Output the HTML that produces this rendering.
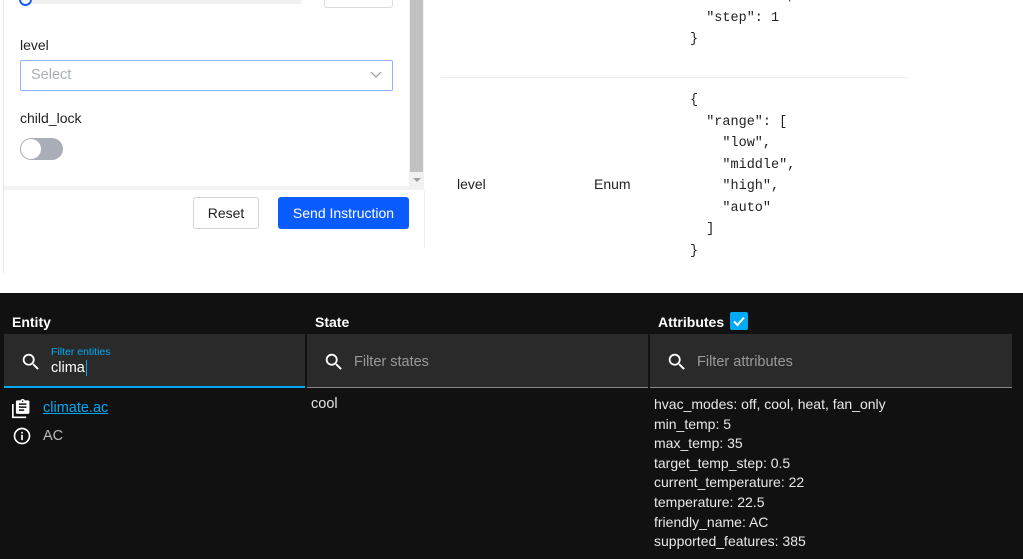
<!DOCTYPE html>
<html><head><meta charset="utf-8"><style>
*{margin:0;padding:0;box-sizing:border-box}
body{width:1023px;height:559px;overflow:hidden;background:#fff;font-family:"Liberation Sans",sans-serif;position:relative}
.a{position:absolute}
.mono{font-family:"Liberation Mono",monospace;font-size:13.5px;color:#222;white-space:pre;line-height:21.5px}
.lbl{font-size:14px;color:#222}
.dk{color:#e1e1e1}
.hd{font-weight:bold;font-size:14px;color:#fff}
.flt{background:#2a2a2a;height:54px;border-bottom:1px solid #888}
.ph{font-size:14.5px;color:#9a9a9a}
</style></head><body>
<div class="a" style="left:3px;top:0;width:1px;height:273px;background:#e6e6e6"></div>
<div class="a" style="left:26px;top:0;width:276px;height:4px;background:#f0f0f0;border-radius:2px"></div>
<div class="a" style="left:19px;top:-7px;width:13px;height:13px;border:2px solid #1a5cff;border-radius:50%;background:#fff"></div>
<div class="a" style="left:324px;top:-4px;width:69px;height:12px;border:1px solid #ddd;border-radius:3px"></div>
<div class="a lbl" style="left:20px;top:37px">level</div>
<div class="a" style="left:20px;top:60px;width:373px;height:31px;border:1px solid #8fb3ff;border-radius:2px"></div>
<div class="a" style="left:31px;top:67px;font-size:14.5px;color:#aab0ba">Select</div>
<svg class="a" style="left:370px;top:70px" width="12" height="10"><path d="M1 2 L6 7 L11 2" stroke="#999" fill="none" stroke-width="1.2"/></svg>
<div class="a lbl" style="left:20px;top:110px">child_lock</div>
<div class="a" style="left:20px;top:138px;width:43px;height:22px;border-radius:11px;background:#a9aeb8"></div>
<div class="a" style="left:21px;top:139px;width:20px;height:20px;border-radius:50%;background:#fff"></div>
<div class="a" style="left:409px;top:0;width:15px;height:188px;background:#f1f1f1"></div>
<div class="a" style="left:410px;top:0;width:13px;height:172px;background:#c1c1c1"></div>
<div class="a" style="left:413px;top:178px;width:0;height:0;border-left:4px solid transparent;border-right:4px solid transparent;border-top:4px solid #a0a0a0"></div>
<div class="a" style="left:4px;top:186px;width:420px;height:4px;background:#f2f2f2"></div>
<div class="a" style="left:424px;top:190px;width:1px;height:58px;background:#eee"></div>
<div class="a" style="left:193px;top:197px;width:66px;height:32px;border:1px solid #d4d4d4;border-radius:3px;font-size:14px;color:#222;text-align:center;line-height:30px">Reset</div>
<div class="a" style="left:278px;top:197px;width:131px;height:32px;background:#0a5cff;border-radius:3px;font-size:14px;color:#fff;text-align:center;line-height:32px">Send Instruction</div>
<div class="a mono" style="left:690px;top:-14px">  "scale": 0,
  "step": 1
}</div>
<div class="a" style="left:441px;top:77px;width:467px;height:1px;background:#eee"></div>
<div class="a mono" style="left:690px;top:90px">{
  "range": [
    "low",
    "middle",
    "high",
    "auto"
  ]
}</div>
<div class="a lbl" style="left:457px;top:176px">level</div>
<div class="a lbl" style="left:594px;top:176px">Enum</div>
<div class="a" style="left:0;top:293px;width:1023px;height:266px;background:#111"></div>
<div class="a hd" style="left:12px;top:314px">Entity</div>
<div class="a hd" style="left:315px;top:314px">State</div>
<div class="a hd" style="left:658px;top:314px">Attributes</div>
<div class="a" style="left:730px;top:312px;width:18px;height:18px;background:#03a9f4;border-radius:2px"></div>
<svg class="a" style="left:730px;top:312px" width="18" height="18"><path d="M4 9.5 L7.5 13 L14 5.5" stroke="#fff" stroke-width="2" fill="none"/></svg>
<div class="a flt" style="left:4px;top:334px;width:301px;border-bottom:2px solid #03a9f4"></div>
<div class="a flt" style="left:307px;top:334px;width:341px"></div>
<div class="a flt" style="left:650px;top:334px;width:362px"></div>
<svg class="a" style="left:20px;top:351px" width="22" height="22" viewBox="0 0 24 24"><path fill="#fff" d="M9.5 3A6.5 6.5 0 0116 9.5c0 1.610-.59 3.090-1.560 4.230l.27.27h.79l5 5-1.5 1.5-5-5v-.79l-.27-.27A6.520 6.520 0 019.5 16 6.5 6.5 0 013 9.5 6.5 6.5 0 019.5 3m0 2C7 5 5 7 5 9.5S7 14 9.5 14 14 12 14 9.5 12 5 9.5 5z"/></svg>
<svg class="a" style="left:323px;top:351px" width="22" height="22" viewBox="0 0 24 24"><path fill="#fff" d="M9.5 3A6.5 6.5 0 0116 9.5c0 1.610-.59 3.090-1.560 4.230l.27.27h.79l5 5-1.5 1.5-5-5v-.79l-.27-.27A6.520 6.520 0 019.5 16 6.5 6.5 0 013 9.5 6.5 6.5 0 019.5 3m0 2C7 5 5 7 5 9.5S7 14 9.5 14 14 12 14 9.5 12 5 9.5 5z"/></svg>
<svg class="a" style="left:666px;top:351px" width="22" height="22" viewBox="0 0 24 24"><path fill="#fff" d="M9.5 3A6.5 6.5 0 0116 9.5c0 1.610-.59 3.090-1.560 4.230l.27.27h.79l5 5-1.5 1.5-5-5v-.79l-.27-.27A6.520 6.520 0 019.5 16 6.5 6.5 0 013 9.5 6.5 6.5 0 019.5 3m0 2C7 5 5 7 5 9.5S7 14 9.5 14 14 12 14 9.5 12 5 9.5 5z"/></svg>
<div class="a" style="left:51px;top:346px;font-size:10.5px;color:#03a9f4">Filter entities</div>
<div class="a" style="left:51px;top:360px;font-size:14.5px;color:#fff">clima<span style="border-left:1.5px solid #03a9f4;margin-left:1px"></span></div>
<div class="a ph" style="left:354px;top:354px">Filter states</div>
<div class="a ph" style="left:697px;top:354px">Filter attributes</div>
<svg class="a" style="left:12px;top:399px" width="20" height="20" viewBox="0 0 24 24"><path fill="#fff" d="M17 9H7V7h10v2m0 4H7v-2h10v2m-3 4H7v-2h7v2M12 3a1 1 0 011 1 1 1 0 01-1 1 1 1 0 01-1-1 1 1 0 011-1m7 0h-4.18C14.4 1.84 13.3 1 12 1s-2.4.84-2.82 2H5a2 2 0 00-2 2v14a2 2 0 002 2h14a2 2 0 002-2V5a2 2 0 00-2-2z" transform="translate(2 -1) scale(.9)"/><path d="M1 6v16h16" stroke="#fff" stroke-width="2" fill="none"/></svg>
<svg class="a" style="left:12px;top:426px" width="20" height="20" viewBox="0 0 24 24"><circle cx="12" cy="12" r="9" stroke="#fff" stroke-width="2" fill="none"/><rect x="11" y="10.5" width="2" height="6.5" fill="#fff"/><rect x="11" y="7" width="2" height="2" fill="#fff"/></svg>
<div class="a" style="left:43px;top:400px;font-size:14.5px;color:#03a9f4;text-decoration:underline">climate.ac</div>
<div class="a" style="left:43px;top:428px;font-size:14.5px;color:#bdbdbd">AC</div>
<div class="a dk" style="left:311px;top:396px;font-size:14.5px">cool</div>
<div class="a dk" style="left:654px;top:395px;font-size:14px;line-height:19.6px;color:#e8e8e8">hvac_modes: off, cool, heat, fan_only<br>min_temp: 5<br>max_temp: 35<br>target_temp_step: 0.5<br>current_temperature: 22<br>temperature: 22.5<br>friendly_name: AC<br>supported_features: 385</div>
</body></html>
